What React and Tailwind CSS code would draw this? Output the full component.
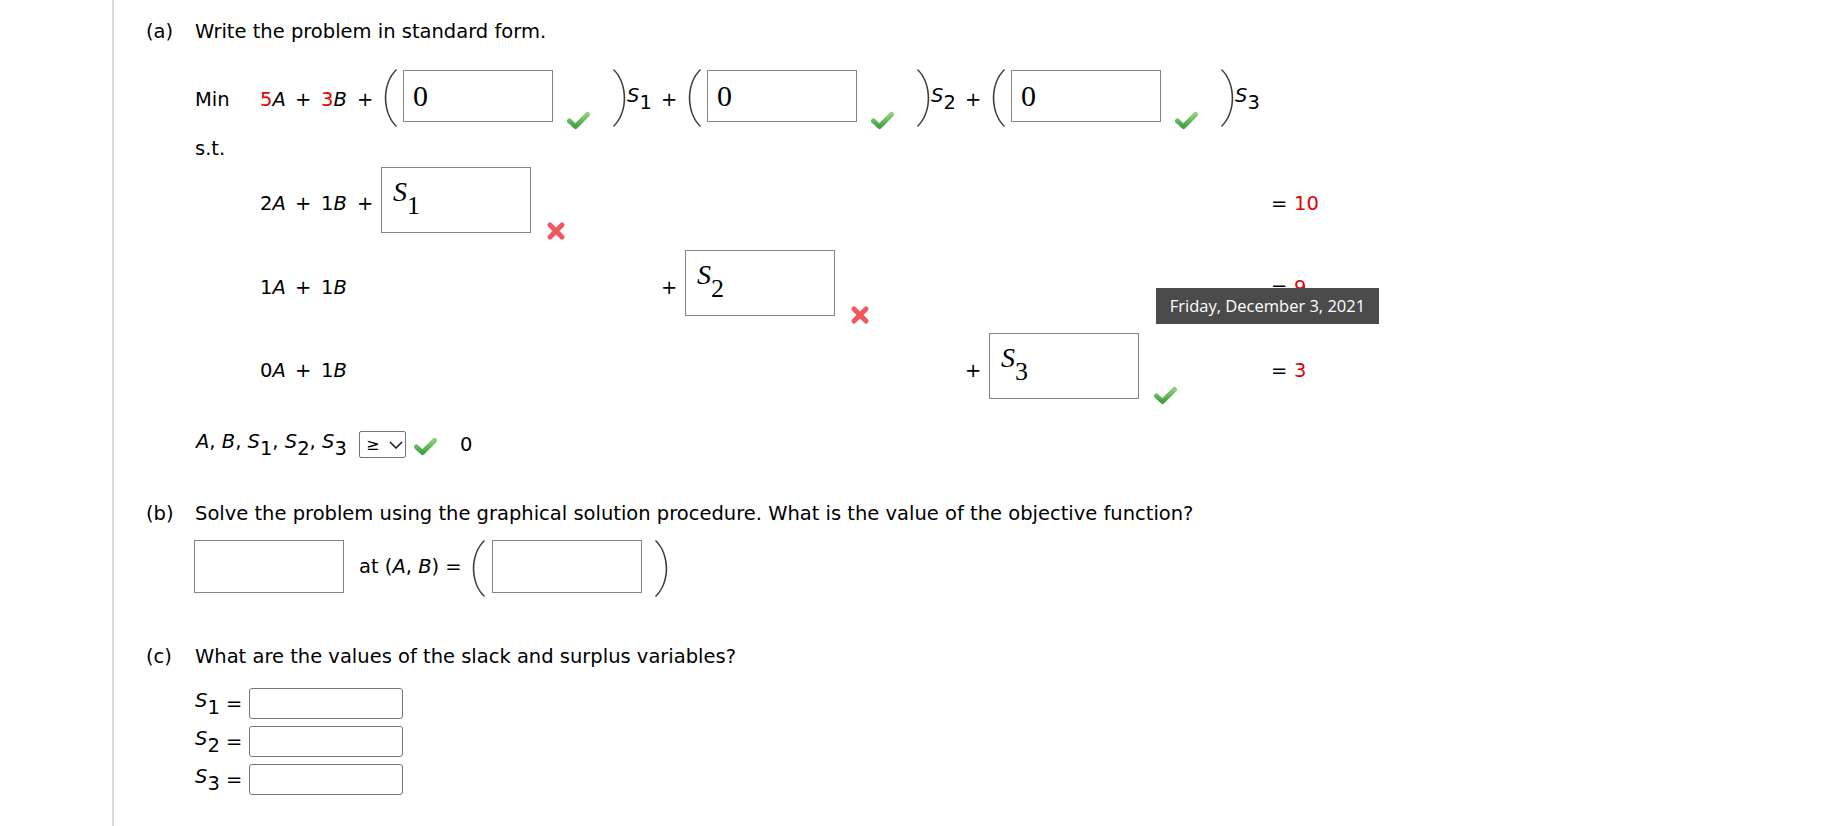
import React from "react";

function Check({ className = "" }) {
  return (
    <svg width="23" height="19" viewBox="0 0 23 19" className={`shrink-0 ${className}`}>
      <defs>
        <linearGradient id="chk" x1="0" y1="0" x2="0" y2="1">
          <stop offset="0" stopColor="#86d07a" />
          <stop offset="1" stopColor="#43a343" />
        </linearGradient>
      </defs>
      <path d="M2.5 10 L8.5 15.5 L20.5 3.5" stroke="url(#chk)" strokeWidth="5" fill="none" strokeLinejoin="round" strokeLinecap="round" />
    </svg>
  );
}

function XMark({ className = "" }) {
  return (
    <svg width="20" height="20" viewBox="0 0 20 20" className={`shrink-0 ${className}`}>
      <path d="M4 4 L16 16 M16 4 L4 16" stroke="#f2575c" strokeWidth="5" strokeLinecap="round" fill="none" />
    </svg>
  );
}

function Paren({ h = 58, right = false, className = "" }) {
  const d = right
    ? `M1 0 C16 ${h * 0.25} 16 ${h * 0.75} 1 ${h} L0 ${h - 1} C14.2 ${h * 0.75} 14.2 ${h * 0.25} 0 1 Z`
    : `M13 0 C-2 ${h * 0.25} -2 ${h * 0.75} 13 ${h} L14 ${h - 1} C-0.2 ${h * 0.75} -0.2 ${h * 0.25} 14 1 Z`;
  return (
    <svg width="14" height={h} viewBox={`0 0 14 ${h}`} className={`shrink-0 ${className}`}>
      <path d={d} fill="#3c3c3c" />
    </svg>
  );
}

function Sub({ n }) {
  return (
    <>
      <span className="italic">S</span>
      <span className="align-[-7px]">{n}</span>
    </>
  );
}

function Terms({ a, b, red = false }) {
  const c = red ? "text-[#e40000]" : "";
  return (
    <div className="flex whitespace-nowrap">
      <span className="w-[35px] shrink-0">
        <span className={c}>{a}</span>
        <span className="italic">A</span>
      </span>
      <span className="w-[26px] shrink-0">+</span>
      <span>
        <span className={c}>{b}</span>
        <span className="italic">B</span>
      </span>
    </div>
  );
}

function ObjCol({ n }) {
  return (
    <div className="flex h-[52px] w-[304px] shrink-0 items-center">
      <span className="w-[26px] shrink-0 pt-[6px]">+</span>
      <Paren h={58} className="mt-[4px]" />
      <div className="ml-[6px] flex h-[52px] w-[150px] shrink-0 items-center border border-[#858585] pl-[9px] font-['Liberation_Serif',serif] text-[30px] leading-none">
        0
      </div>
      <Check className="mb-[-8px] ml-[14px] self-end" />
      <Paren h={58} right className="ml-[23px] mt-[4px]" />
      <span className="whitespace-nowrap pt-[6px]">
        <Sub n={n} />
      </span>
    </div>
  );
}

function SlackBox({ n, mark, markMb = "mb-[-8px]", pt = "pt-[6px]" }) {
  return (
    <div className="flex h-[66px] w-[304px] shrink-0 items-center">
      <span className={`w-[24px] shrink-0 ${pt}`}>+</span>
      <div className="h-[66px] w-[150px] shrink-0 whitespace-nowrap border border-[#858585] pl-[11px] pt-[10px] font-['Liberation_Serif',serif] leading-none">
        <span className="text-[28px] italic">S</span>
        <span className="align-[-13px] text-[26px]">{n}</span>
      </div>
      {mark === "x" ? (
        <XMark className={`ml-[15px] self-end ${markMb}`} />
      ) : (
        <Check className={`ml-[15px] self-end ${markMb}`} />
      )}
    </div>
  );
}

function Empty() {
  return <div className="w-[304px] shrink-0" />;
}

function Rhs({ v, pt }) {
  return (
    <div className={`flex whitespace-nowrap ${pt}`}>
      <span className="w-[25px] shrink-0 pl-[2px]">=</span>
      <span className="text-[#e40000]">{v}</span>
    </div>
  );
}

export default function App() {
  return (
    <div className="relative min-h-[826px] w-[1822px] overflow-hidden bg-white text-black">
      <div className="ml-[112px] min-h-[826px] border-l-2 border-[#d9d9d9] pl-[32px] font-['DejaVu_Sans',sans-serif] text-[19.5px] leading-[23px]">
        {/* (a) */}
        <div className="flex pt-[20px]">
          <div className="w-[49px] shrink-0">(a)</div>
          <div className="flex flex-col">
            <div className="h-[23px]">Write the problem in standard form.</div>

            {/* Objective */}
            <div className="mt-[27px] flex h-[52px] items-center">
              <div className="w-[65px] shrink-0 pt-[6px]">Min</div>
              <div className="w-[97px] shrink-0 pt-[6px]">
                <Terms a="5" b="3" red />
              </div>
              <ObjCol n={1} />
              <ObjCol n={2} />
              <ObjCol n={3} />
            </div>

            <div className="mt-[15px] h-[23px]">s.t.</div>

            {/* Row 1 */}
            <div className="mt-[7px] flex h-[66px] items-center">
              <div className="w-[65px] shrink-0" />
              <div className="w-[97px] shrink-0 pt-[6px]">
                <Terms a="2" b="1" />
              </div>
              <SlackBox n={1} mark="x" markMb="mb-[-8px]" pt="pt-[6px]" />
              <Empty />
              <Empty />
              <Rhs v="10" pt="pt-[6px]" />
            </div>

            {/* Row 2 */}
            <div className="mt-[17px] flex h-[66px] items-center">
              <div className="w-[65px] shrink-0" />
              <div className="w-[97px] shrink-0 pt-[9px]">
                <Terms a="1" b="1" />
              </div>
              <Empty />
              <SlackBox n={2} mark="x" markMb="mb-[-9px]" pt="pt-[9px]" />
              <Empty />
              <Rhs v="9" pt="pt-[9px]" />
            </div>

            {/* Row 3 */}
            <div className="mt-[17px] flex h-[66px] items-center">
              <div className="w-[65px] shrink-0" />
              <div className="w-[97px] shrink-0 pt-[8px]">
                <Terms a="0" b="1" />
              </div>
              <Empty />
              <Empty />
              <SlackBox n={3} mark="check" markMb="mb-[-6px]" pt="pt-[8px]" />
              <Rhs v="3" pt="pt-[8px]" />
            </div>

            {/* Non-negativity */}
            <div className="ml-[1px] mt-[32px] flex h-[27px] items-center">
              <span className="w-[163px] shrink-0 whitespace-nowrap">
                <span className="italic">A</span>, <span className="italic">B</span>, <Sub n={1} />, <Sub n={2} />, <Sub n={3} />
              </span>
              <div className="flex h-[27px] w-[47px] shrink-0 items-center rounded-[2px] border border-[#767676] pl-[6px] text-[16px] leading-none">
                <span>≥</span>
                <svg width="14" height="8" viewBox="0 0 14 8" className="ml-[10px] shrink-0">
                  <path d="M1 1 L7 7 L13 1" stroke="#222" strokeWidth="1.6" fill="none" />
                </svg>
              </div>
              <Check className="ml-[8px] mt-[4px]" />
              <span className="ml-[23px]">0</span>
            </div>
          </div>
        </div>

        {/* (b) */}
        <div className="mt-[44px] flex">
          <div className="w-[49px] shrink-0">(b)</div>
          <div className="flex flex-col">
            <div className="h-[23px] whitespace-nowrap">
              Solve the problem using the graphical solution procedure. What is the value of the objective function?
            </div>
            <div className="ml-[-1px] mt-[15px] flex h-[53px] items-center">
              <div className="h-[53px] w-[150px] shrink-0 border border-[#858585]" />
              <span className="ml-[15px] w-[112px] shrink-0 whitespace-nowrap">
                at (<span className="italic">A</span>, <span className="italic">B</span>) =
              </span>
              <Paren h={57} className="mt-[4px]" />
              <div className="ml-[7px] h-[53px] w-[150px] shrink-0 border border-[#858585]" />
              <Paren h={57} right className="ml-[13px] mt-[4px]" />
            </div>
          </div>
        </div>

        {/* (c) */}
        <div className="mt-[52px] flex">
          <div className="w-[49px] shrink-0">(c)</div>
          <div className="flex flex-col">
            <div className="h-[23px] whitespace-nowrap">What are the values of the slack and surplus variables?</div>
            <div className="mt-[20px] flex flex-col gap-[7px]">
              {[1, 2, 3].map((n) => (
                <div key={n} className="flex h-[31px] items-center">
                  <span className="w-[31px] shrink-0 whitespace-nowrap">
                    <Sub n={n} />
                  </span>
                  <span className="w-[23px] shrink-0">=</span>
                  <div className="h-[31px] w-[154px] shrink-0 rounded-[3px] border border-[#767676]" />
                </div>
              ))}
            </div>
          </div>
        </div>
      </div>

      {/* Tooltip overlay */}
      <div className="absolute left-[1156px] top-[288px] flex h-[36px] w-[223px] items-center justify-center bg-[#4b4b4b] font-['Open_Sans',sans-serif] text-[16.5px] leading-none text-white">
        Friday, December 3, 2021
      </div>
    </div>
  );
}
